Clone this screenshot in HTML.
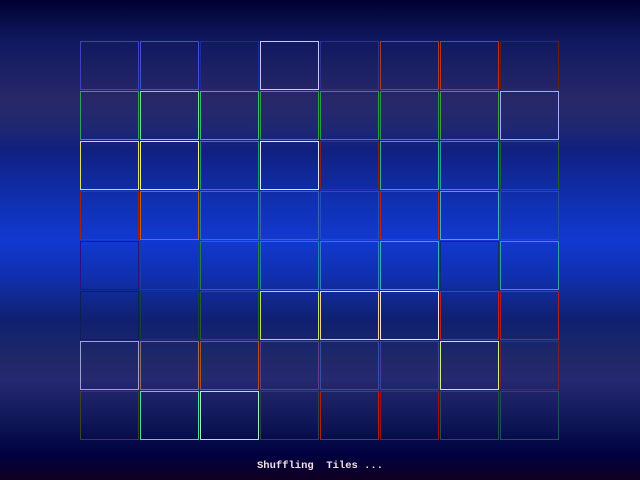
<!DOCTYPE html><html><head><style>
html,body{margin:0;padding:0;width:640px;height:480px;overflow:hidden}
body{background:linear-gradient(to bottom,#000030 0px,#101860 40px,#282868 100px,#202870 125px,#102080 150px,#1030b0 200px,#1238d0 240px,#1030b0 275px,#102070 320px,#202868 360px,#262870 380px,#101858 420px,#000040 455px,#100020 480px);position:relative;font-family:"Liberation Mono",monospace}
.t{position:absolute;width:57px;height:47px;border:1px solid}
#txt{position:absolute;top:460px;left:0;width:640px;text-align:center;color:#f4e0e0;font-weight:bold;font-size:10.5px;letter-spacing:0px;white-space:pre}
</style></head><body>
<div id="g"></div>
<div id="txt">Shuffling  Tiles ...</div>
<script>
var c=[
["#4040c0","#4050d0","#1030a0","#c8c8ff","#303090","#a04020","#c03020","#602010"],
["#30a060","#70e090","#30c070","#30a040","#20a040","#309050","#40a040","#a8a8ff"],
["#e0e060","#f0f080","#10a070","#e0e0ff","#802020","#30b090","#20a0a0","#206030"],
["#a02010","#c06010","#2080a0","#4060c0","#2050c0","#c02010","#40b0c0","#2050a0"],
["#301080","#1040a0","#208040","#2080b0","#3080c0","#30b0c0","#103060","#30a0a0"],
["#102050","#104040","#206030","#c0e060","#f0d0a0","#f0e0e0","#c02020","#b02020"],
["#a0a0d0","#907060","#b05020","#604080","#3050a0","#4040a0","#d0f080","#702030"],
["#404020","#40e0b0","#a0f0c0","#304050","#b02010","#a01010","#205050","#205060"]];
var h="";
for(var r=0;r<8;r++)for(var k=0;k<8;k++)h+='<div class="t" style="left:'+(80+k*60)+'px;top:'+(41+r*50)+'px;border-color:'+c[r][k]+'"></div>';
document.getElementById("g").innerHTML=h;
</script>
</body></html>
